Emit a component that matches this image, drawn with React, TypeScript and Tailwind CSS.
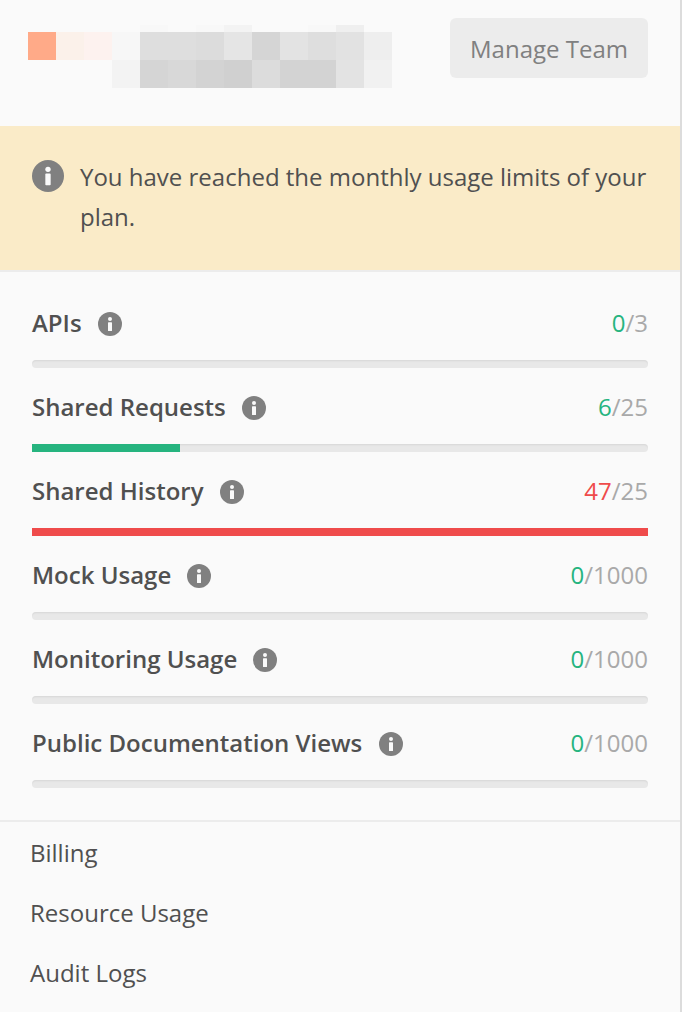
const usage = [
  { name: "APIs", used: 0, limit: 3, bar: 0 },
  { name: "Shared Requests", used: 6, limit: 25, bar: 24 },
  { name: "Shared History", used: 47, limit: 25, bar: 100 },
  { name: "Mock Usage", used: 0, limit: 1000, bar: 0 },
  { name: "Monitoring Usage", used: 0, limit: 1000, bar: 0 },
  { name: "Public Documentation Views", used: 0, limit: 1000, bar: 0 },
];

// pixelated team name, one row per band
const blurTop = ["", "", "", "#fafafa", "#f8f8f8", "", "#f8f8f8", "#f3f3f3", "", "", "#f8f8f8", "#efefef", ""];
const blurMid = ["#ffaa88", "#fbf1ea", "#fdf2ef", "#f7f7f7", "#dedede", "#dedede", "#dcdcdc", "#e5e5e5", "#d5d5d5", "#e3e3e3", "#dedede", "#e2e2e2", "#eeeeee"];
const blurLow = ["", "", "", "#f3f3f3", "#d5d5d5", "#d8d8d8", "#d3d3d3", "#d0d0d0", "#dcdcdc", "#d3d3d3", "#d3d3d3", "#e3e3e3", "#f1f1f1"];

function InfoIcon({ size }: { size: number }) {
  return (
    <svg width={size} height={size} viewBox="0 0 24 24" className="shrink-0">
      <circle cx="12" cy="12" r="12" fill="#808080" />
      <circle cx="12" cy="7" r="2" fill="#fafafa" />
      <rect x="10" y="10.2" width="4" height="8.8" rx="0.6" fill="#fafafa" />
    </svg>
  );
}

function BlurRow({ cells, height }: { cells: string[]; height: string }) {
  return (
    <div className={`flex ${height}`}>
      {cells.map((color, index) => (
        <div key={index} className="w-[28px]" style={{ backgroundColor: color || "transparent" }} />
      ))}
    </div>
  );
}

function UsageRow({ name, used, limit, bar }: { name: string; used: number; limit: number; bar: number }) {
  const over = used > limit;
  return (
    <div className="h-[84px]">
      <div className="flex h-[46px] items-center justify-between">
        <div className="flex items-center gap-[16.2px]">
          <span className="text-[24px] font-semibold text-[#505050]">{name}</span>
          <div className="pt-[2px]">
            <InfoIcon size={24} />
          </div>
        </div>
        <span className="text-[24px] text-[#a9a9a9]">
          <span className={over ? "text-[#ef4b4b]" : "text-[#26b47f]"}>{used}</span>/{limit}
        </span>
      </div>
      <div className="relative mt-[14px] h-[8px] rounded-[4px] bg-[#e8e8e8] shadow-[inset_0_2px_2px_-1px_rgba(0,0,0,0.08)]">
        {bar > 0 && <div className={`h-full ${over ? "bg-[#ef4b4b]" : "bg-[#26b47f]"}`} style={{ width: `${bar}%` }} />}
      </div>
    </div>
  );
}

export default function App() {
  return (
    <div className="h-[1012px] w-[691px] overflow-hidden bg-white font-['Open_Sans','Noto_Sans',sans-serif]">
      <div className="h-full w-[682px] border-r-2 border-[#dcdcdc] bg-[#fafafa]">
        <header className="flex h-[126px] items-start justify-between pt-[18px] pr-[32px] pl-[28px]">
          <div className="pt-[7px]">
            <BlurRow cells={blurTop} height="h-[7px]" />
            <BlurRow cells={blurMid} height="h-[28px]" />
            <BlurRow cells={blurLow} height="h-[28px]" />
          </div>
          <button className="h-[60px] w-[198px] rounded-[6px] bg-[#ececec] pt-[2px] text-[24px] text-[#808080]">Manage Team</button>
        </header>

        <div className="flex h-[146px] gap-4 border-b-2 border-[#ececec] bg-[#faebc8] pt-[31px] pr-[32px] pl-[32px]">
          <div className="pt-[3px]">
            <InfoIcon size={32} />
          </div>
          <p className="text-[24px] leading-[40px] text-[#505050]">You have reached the monthly usage limits of your plan.</p>
        </div>

        <section className="h-[550px] border-b-2 border-[#ececec] pt-[28px] pr-[32px] pl-[32px]">
          {usage.map((item) => (
            <UsageRow key={item.name} {...item} />
          ))}
        </section>

        <nav className="pt-[1px] pl-[30px] text-[24px] text-[#505050]">
          <div className="flex h-[60px] items-center">Billing</div>
          <div className="flex h-[60px] items-center">Resource Usage</div>
          <div className="flex h-[60px] items-center">Audit Logs</div>
        </nav>
      </div>
    </div>
  );
}
